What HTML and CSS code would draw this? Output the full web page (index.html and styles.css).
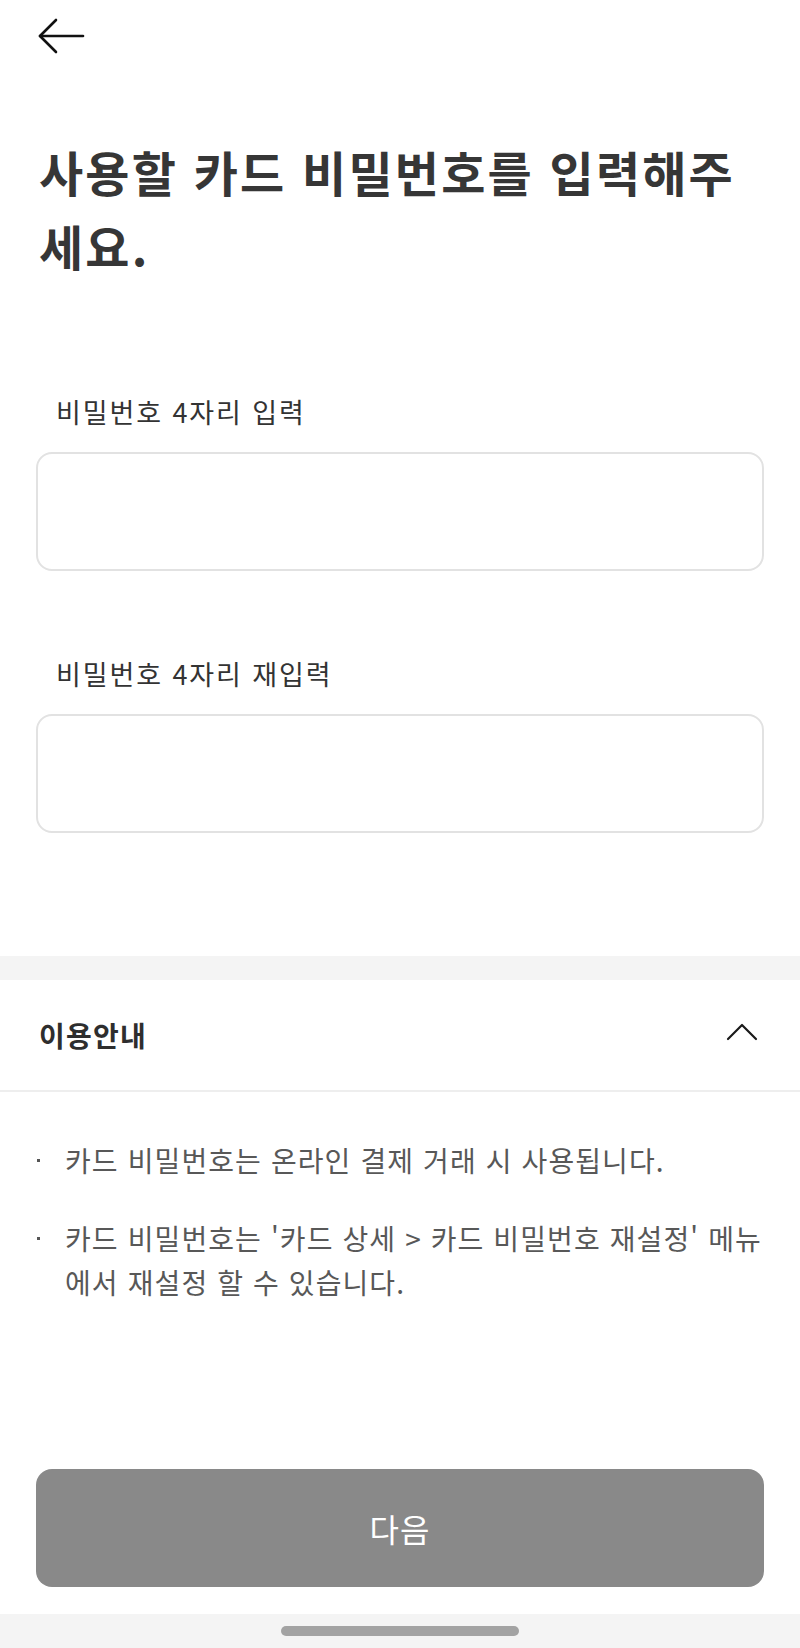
FILE: index.html
```html
<!DOCTYPE html>
<html lang="ko">
<head>
<meta charset="utf-8">
<title>카드 비밀번호 입력</title>
<link rel="stylesheet" href="styles.css">
</head>
<body>
<div class="page">
  <header class="topbar">
    <button class="back" aria-label="뒤로">
      <svg width="48" height="38" viewBox="0 0 48 38" fill="none" stroke="#111" stroke-width="2.6" stroke-linecap="round" stroke-linejoin="round">
        <path d="M46 19H3"/>
        <path d="M19 3L3 19l16 16"/>
      </svg>
    </button>
  </header>

  <h1 class="title">사용할 카드 비밀번호를 입력해주<br>세요.</h1>

  <section class="form">
    <div class="field">
      <label class="field-label">비밀번호 4자리 입력</label>
      <div class="field-box"></div>
    </div>
    <div class="field field-second">
      <label class="field-label">비밀번호 4자리 재입력</label>
      <div class="field-box"></div>
    </div>
  </section>

  <div class="gap-band"></div>

  <section class="guide">
    <div class="guide-head">
      <span class="guide-title">이용안내</span>
      <svg class="chev" width="32" height="20" viewBox="0 0 32 20" fill="none" stroke="#1a1a1a" stroke-width="2.2" stroke-linecap="round" stroke-linejoin="round">
        <path d="M2 17L16 3l14 14"/>
      </svg>
    </div>
    <ul class="guide-list">
      <li>카드 비밀번호는 온라인 결제 거래 시 사용됩니다.</li>
      <li>카드 비밀번호는 '카드 상세 &gt; 카드 비밀번호 재설정' 메뉴<wbr>에서 재설정 할 수 있습니다.</li>
    </ul>
  </section>

  <div class="action">
    <button class="next-btn">다음</button>
  </div>

  <div class="navbar"><span class="handle"></span></div>
</div>
</body>
</html>
```

FILE: styles.css
```css
* { box-sizing: border-box; }

html, body {
  margin: 0;
  padding: 0;
  background: #ffffff;
}

body {
  font-family: "Noto Sans CJK KR", "Noto Sans", sans-serif;
  color: #333333;
}

.page {
  width: 800px;
  height: 1648px;
  display: flex;
  flex-direction: column;
}

.topbar {
  height: 72px;
  display: flex;
  align-items: center;
  padding-left: 37px;
}

.back {
  border: 0;
  background: none;
  padding: 0;
  display: flex;
  cursor: pointer;
}

.title {
  margin: 62px 0 0;
  padding: 0 20px 0 39px;
  font-size: 48px;
  line-height: 74px;
  font-weight: 700;
  color: #363636;
  letter-spacing: 2.2px;
  white-space: nowrap;
}

.form {
  padding: 112px 36px 0;
}

.field-second {
  margin-top: 85px;
}

.field-label {
  display: block;
  padding-left: 20px;
  font-size: 27px;
  line-height: 36px;
  color: #333333;
  letter-spacing: 1.9px;
}

.field-box {
  margin-top: 22px;
  height: 119px;
  border: 2px solid #e2e2e2;
  border-radius: 16px;
  background: #ffffff;
}

.gap-band {
  margin-top: 123px;
  height: 24px;
  background: #f4f4f4;
}

.guide {
  flex: 1;
}

.guide-head {
  height: 112px;
  display: flex;
  align-items: center;
  justify-content: space-between;
  padding: 0 42px 0 39px;
  border-bottom: 2px solid #eeeeee;
}

.guide-title {
  font-size: 28px;
  font-weight: 700;
  color: #2e2e2e;
  letter-spacing: 1.2px;
}

.chev {
  display: block;
  margin-top: -6px;
}

.guide-list {
  list-style: none;
  margin: 0;
  padding: 46px 20px 0 36px;
}

.guide-list li {
  position: relative;
  padding-left: 29px;
  font-size: 28px;
  line-height: 44px;
  color: #585858;
  letter-spacing: 1.1px;
  word-break: keep-all;
}

.guide-list li + li {
  margin-top: 34px;
}

.guide-list li::before {
  content: "";
  position: absolute;
  left: 1px;
  top: 21px;
  width: 3px;
  height: 3px;
  background: #555555;
}

.action {
  padding: 0 36px 27px;
}

.next-btn {
  display: block;
  width: 100%;
  height: 118px;
  border: 0;
  border-radius: 16px;
  background: #898989;
  color: #ffffff;
  font-family: inherit;
  font-size: 32px;
  font-weight: 400;
  letter-spacing: 1px;
}

.navbar {
  height: 34px;
  background: #f4f4f4;
  display: flex;
  justify-content: center;
  padding-top: 12px;
}

.handle {
  display: block;
  width: 238px;
  height: 10px;
  border-radius: 5px;
  background: #a3a3a3;
}
```
